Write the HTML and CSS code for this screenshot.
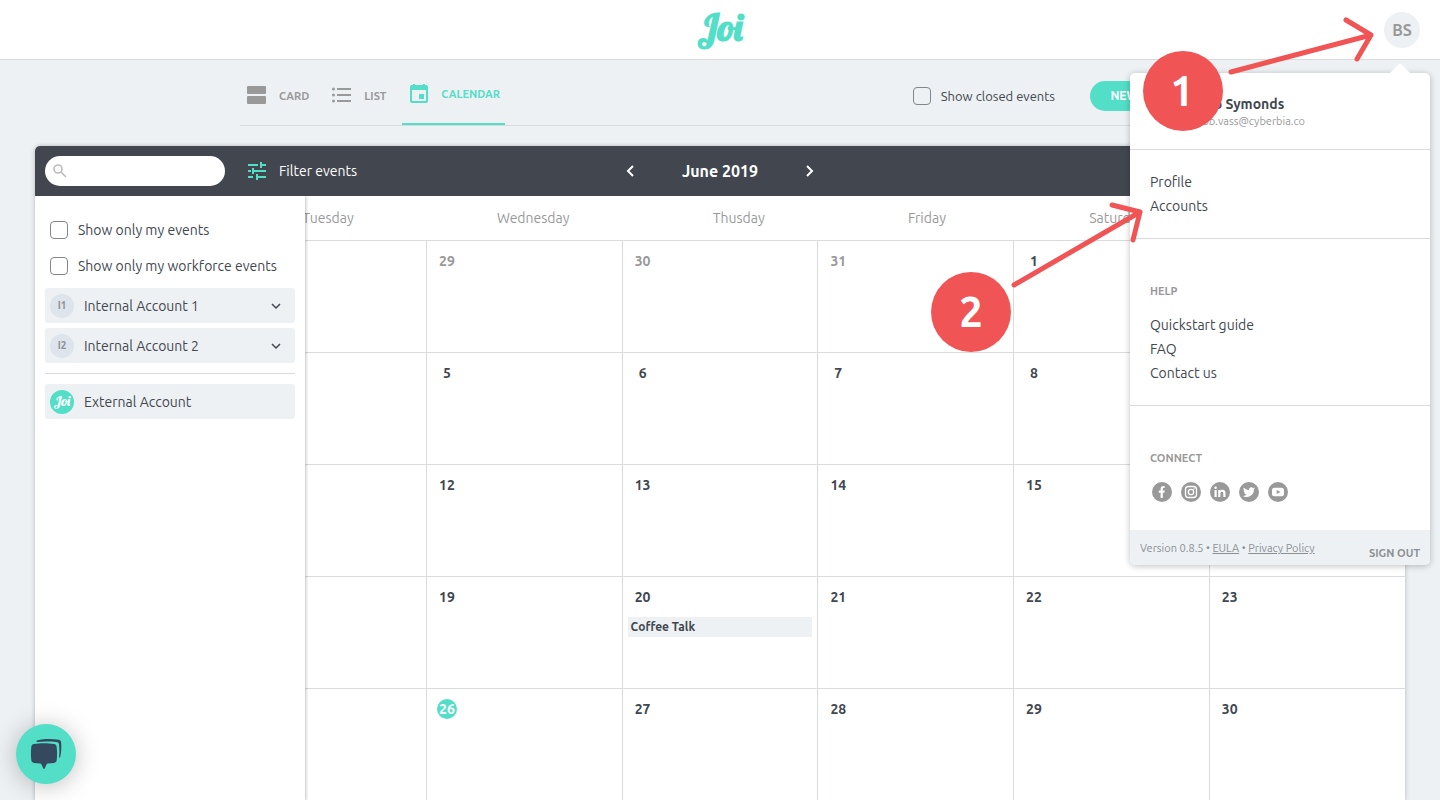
FILE: index.html
```html
<!DOCTYPE html>
<html lang="en">
<head>
    <meta charset="UTF-8">
    <meta name="viewport" content="width=device-width, initial-scale=1.0">
    <title>Joi - Calendar</title>
    <link rel="stylesheet" href="styles.css">
</head>
<body>
    <header class="topbar">
        <a href="#" class="logo">Joi</a>
        <button type="button" class="user-button">BS</button>
    </header>

    <div class="view-bar">
        <nav class="tabs">
            <a href="#" class="tab">
                <svg width="20" height="20" viewBox="0 0 20 20" fill="currentColor"><rect x="0" y="0" width="19" height="8" rx="1"/><rect x="0" y="10" width="19" height="8" rx="1"/></svg>
                CARD
            </a>
            <a href="#" class="tab">
                <svg width="20" height="20" viewBox="0 0 20 20" fill="currentColor"><circle cx="1.5" cy="3" r="1.5"/><circle cx="1.5" cy="9" r="1.5"/><circle cx="1.5" cy="15" r="1.5"/><rect x="5" y="2" width="14" height="2"/><rect x="5" y="8" width="14" height="2"/><rect x="5" y="14" width="14" height="2"/></svg>
                LIST
            </a>
            <a href="#" class="tab active">
                <svg width="20" height="20" viewBox="0 0 20 20" fill="currentColor"><path fill-rule="evenodd" d="M4 0h2v1h8V0h2v1h1a2 2 0 0 1 2 2v14a2 2 0 0 1-2 2H3a2 2 0 0 1-2-2V3a2 2 0 0 1 2-2h1zM3 6v11h14V6z"/><rect x="10" y="10" width="5" height="5"/></svg>
                CALENDAR
            </a>
        </nav>
        <div class="view-actions">
            <label class="check"><input type="checkbox"> Show closed events</label>
            <button type="button" class="new-button">NEW EVENT</button>
        </div>
    </div>

    <main class="calendar">
        <div class="toolbar">
            <div class="toolbar-left">
                <label class="search">
                    <svg width="14" height="14" viewBox="0 0 14 14" fill="none" stroke="#bbb" stroke-width="1.6"><circle cx="5" cy="5" r="4"/><path d="M8 8l5 5"/></svg>
                    <input type="text" aria-label="Search events">
                </label>
                <button type="button" class="filter-button">
                    <svg width="20" height="20" viewBox="0 0 20 20" fill="none" stroke="#52dec7" stroke-width="2"><path d="M1 4h10M14 4h5M14 1v6M1 10h3M7 10h12M6 7v6M1 16h5M9 16h10M10 13v6"/></svg>
                    Filter events
                </button>
            </div>
            <div class="month">
                <button type="button" aria-label="Previous month"><svg width="20" height="20" viewBox="0 0 20 20"><path d="M13 5l-5 5 5 5"/></svg></button>
                <h1>June 2019</h1>
                <button type="button" aria-label="Next month"><svg width="20" height="20" viewBox="0 0 20 20"><path d="M7 5l5 5-5 5"/></svg></button>
            </div>
        </div>

        <div class="calendar-body">
            <div class="weekdays">
                <span>Tuesday</span>
                <span>Wednesday</span>
                <span>Thusday</span>
                <span>Friday</span>
                <span>Saturday</span>
                <span>Sunday</span>
            </div>
            <table class="days">
                <tbody>
                    <tr>
                        <td></td>
                        <td></td>
                        <td class="other"><span class="date">29</span></td>
                        <td class="other"><span class="date">30</span></td>
                        <td class="other"><span class="date">31</span></td>
                        <td><span class="date">1</span></td>
                        <td></td>
                    </tr>
                    <tr>
                        <td></td>
                        <td></td>
                        <td><span class="date">5</span></td>
                        <td><span class="date">6</span></td>
                        <td><span class="date">7</span></td>
                        <td><span class="date">8</span></td>
                        <td></td>
                    </tr>
                    <tr>
                        <td></td>
                        <td></td>
                        <td><span class="date">12</span></td>
                        <td><span class="date">13</span></td>
                        <td><span class="date">14</span></td>
                        <td><span class="date">15</span></td>
                        <td></td>
                    </tr>
                    <tr>
                        <td></td>
                        <td></td>
                        <td><span class="date">19</span></td>
                        <td><span class="date">20</span><a href="#" class="event">Coffee Talk</a></td>
                        <td><span class="date">21</span></td>
                        <td><span class="date">22</span></td>
                        <td><span class="date">23</span></td>
                    </tr>
                    <tr>
                        <td></td>
                        <td></td>
                        <td><span class="date today">26</span></td>
                        <td><span class="date">27</span></td>
                        <td><span class="date">28</span></td>
                        <td><span class="date">29</span></td>
                        <td><span class="date">30</span></td>
                    </tr>
                </tbody>
            </table>

            <aside class="filters">
                <label class="check"><input type="checkbox"> Show only my events</label>
                <label class="check"><input type="checkbox"> Show only my workforce events</label>
                <div class="accounts">
                    <button type="button" class="account">
                        <span class="badge">I1</span>
                        Internal Account 1
                        <svg class="chevron" width="10" height="10" viewBox="0 0 10 10"><path d="M1 3l4 4 4-4"/></svg>
                    </button>
                    <button type="button" class="account">
                        <span class="badge">I2</span>
                        Internal Account 2
                        <svg class="chevron" width="10" height="10" viewBox="0 0 10 10"><path d="M1 3l4 4 4-4"/></svg>
                    </button>
                </div>
                <div class="accounts external">
                    <button type="button" class="account">
                        <span class="badge brand">Joi</span>
                        External Account
                    </button>
                </div>
            </aside>
        </div>
    </main>

    <div class="user-menu">
        <div class="user-info">
            <div class="user-name">Bob Symonds</div>
            <div class="user-email">bob.vass@cyberbia.co</div>
        </div>
        <div class="menu-section">
            <a href="#">Profile</a>
            <a href="#">Accounts</a>
        </div>
        <div class="menu-section titled">
            <h2>HELP</h2>
            <a href="#">Quickstart guide</a>
            <a href="#">FAQ</a>
            <a href="#">Contact us</a>
        </div>
        <div class="menu-section titled connect">
            <h2>CONNECT</h2>
            <div class="social">
                <a href="#" aria-label="Facebook"><svg width="24" height="24" viewBox="0 0 24 24"><circle cx="12" cy="12" r="10" fill="#999"/><path fill="#fff" d="M10.600 18v-5.300H8.800v-2.200h1.800V9c0-1.900 1.100-2.900 2.700-2.900.8 0 1.400.1 1.400.1V8h-.9c-.8 0-1 .5-1 1v1.500h1.900l-.3 2.200h-1.600V18z"/></svg></a>
                <a href="#" aria-label="Instagram"><svg width="24" height="24" viewBox="0 0 24 24" fill="none" stroke="#fff" stroke-width="1.3"><circle cx="12" cy="12" r="10" fill="#999" stroke="none"/><rect x="6.5" y="6.5" width="11" height="11" rx="3"/><circle cx="12" cy="12" r="2.7"/><circle cx="15.1" cy="8.9" r=".7" fill="#fff" stroke="none"/></svg></a>
                <a href="#" aria-label="LinkedIn"><svg width="24" height="24" viewBox="0 0 24 24"><circle cx="12" cy="12" r="10" fill="#999"/><circle cx="7.6" cy="7.8" r="1.3" fill="#fff"/><path fill="#fff" d="M6.5 10h2.2v7H6.500zM10.200 10h2.100v1c.4-.7 1.200-1.200 2.300-1.200 2.200 0 2.900 1.300 2.900 3.400V17h-2.200v-3.500c0-1-.2-1.800-1.300-1.800s-1.600.8-1.600 1.800V17h-2.200z"/></svg></a>
                <a href="#" aria-label="Twitter"><svg width="24" height="24" viewBox="0 0 24 24"><circle cx="12" cy="12" r="10" fill="#999"/><path fill="#fff" d="M18 8.300c-.4.200-.9.300-1.400.4.500-.3.900-.8 1.100-1.400-.5.300-1 .5-1.600.6a2.500 2.500 0 0 0-4.200 2.300c-2-.1-3.900-1.100-5.100-2.600-.7 1.100-.3 2.600.8 3.300-.4 0-.8-.1-1.100-.3 0 1.200.8 2.200 2 2.500-.4.100-.7.100-1.100 0 .3 1 1.200 1.700 2.300 1.700A5 5 0 0 1 6 15.900a7 7 0 0 0 10.800-6.300c.5-.4.900-.8 1.200-1.300z"/></svg></a>
                <a href="#" aria-label="YouTube"><svg width="24" height="24" viewBox="0 0 24 24"><circle cx="12" cy="12" r="10" fill="#999"/><rect x="6" y="7.700" width="12" height="8.600" rx="2.500" fill="#fff"/><path fill="#999" d="M10.700 9.900v4.200l3.700-2.100z"/></svg></a>
            </div>
        </div>
        <div class="menu-footer">
            <span>Version 0.8.5 • <a href="#">EULA</a> • <a href="#">Privacy Policy</a></span>
            <button type="button">SIGN OUT</button>
        </div>
    </div>

    <button type="button" class="chat-button" aria-label="Open chat">
        <svg width="32" height="32" viewBox="0 0 32 32" fill="#34495e"><path d="M7 2.500C14 .8 22 .8 28.500 1.800 30.500 2 31 3 31.200 5c.3 5 .1 9-1 14-.2.800-1 1-1.100 0 .4-4 .4-8 0-12.200-.2-2-1-2.600-3-2.800C20 3.300 13 3.400 7.200 4c-1 0-1-1.300-.2-1.500z"/><path d="M4 6c6-1 14-1 20 0 1.700.3 2.500 1.200 2.700 3 .5 4.500.5 9 0 13-.2 1.800-1 2.600-2.700 2.900l-6 .6c-1.300.2-1.800 1.300-2.300 2.700-.5 1.500-1.300 2.700-1.700 2.700s-1.200-1.200-1.700-2.700c-.5-1.400-1-2.500-2.300-2.700l-6-.6C2.300 24.600 1.500 23.800 1.300 22c-.5-4-.5-8.500 0-13C1.500 7.200 2.300 6.300 4 6z"/></svg>
    </button>

    <!-- Numbered steps -->
    <svg class="steps" width="520" height="360" viewBox="0 0 520 360">
        <g class="arrow">
            <path d="M311 72L451 35M426 20L451 35L437 59"/>
            <path d="M94 285L220 212M192 205L220 212L213 240"/>
        </g>
        <circle cx="263" cy="91" r="40"/>
        <text x="262" y="106">1</text>
        <circle cx="51" cy="312" r="40"/>
        <text x="51" y="327">2</text>
    </svg>
</body>
</html>
```
FILE: styles.css
```css
* {
    box-sizing: border-box;
}
body {
    margin: 0;
    height: 100vh;
    overflow: hidden;
    position: relative;
    background-color: #edf1f4;
    color: #42474f;
    font-family: Ubuntu, "Noto Sans", sans-serif;
    font-size: 14px;
    line-height: 24px;
}
a {
    color: inherit;
    text-decoration: none;
}
button {
    padding: 0;
    border: none;
    background: none;
    color: inherit;
    font: inherit;
    cursor: pointer;
}
svg {
    display: block;
    flex-shrink: 0;
}

/* Top bar */
.topbar {
    display: grid;
    grid-template-columns: 1fr auto 1fr;
    align-items: center;
    height: 60px;
    padding: 0 20px;
    background-color: #fff;
    border-bottom: 1px solid #d8dadb;
}
.logo {
    grid-column: 2;
    padding-bottom: 6px;
    color: #52dec7;
    font-family: Lobster, "Liberation Serif", serif;
    font-size: 38px;
    font-weight: bold;
    line-height: 48px;
}
.user-button {
    justify-self: end;
    width: 36px;
    height: 36px;
    border-radius: 50%;
    background-color: #edf1f4;
    color: #999;
    font-size: 16px;
    font-weight: bold;
}

/* View switcher */
.view-bar {
    display: flex;
    justify-content: space-between;
    max-width: 960px;
    height: 66px;
    margin: 0 auto 20px;
    border-bottom: 1px solid #d8dadb;
}
.tabs {
    display: flex;
    gap: 11px;
}
.tab {
    display: flex;
    align-items: center;
    gap: 12px;
    padding: 6px 5px 0 7px;
    color: #999;
    font-size: 11px;
    font-weight: bold;
}
.tab.active {
    padding-top: 4px;
    border-bottom: 2px solid #52dec7;
    color: #52dec7;
}
.view-actions {
    display: flex;
    align-items: center;
    gap: 35px;
    padding-top: 7px;
    font-size: 13px;
}
.check {
    display: flex;
    align-items: center;
    gap: 10px;
}
.check input {
    appearance: none;
    width: 18px;
    height: 18px;
    margin: 0;
    border: 1px solid #83878c;
    border-radius: 4px;
}
.new-button {
    width: 110px;
    height: 30px;
    border-radius: 15px;
    background-color: #52dec7;
    color: #fff;
    font-size: 12px;
    font-weight: bold;
}

/* Calendar */
.calendar {
    margin: 0 35px;
    border-radius: 5px 5px 0 0;
    background-color: #fff;
    box-shadow: 0 0 4px rgba(0, 0, 0, 0.25);
}
.toolbar {
    display: grid;
    grid-template-columns: 1fr 200px 1fr;
    align-items: center;
    height: 50px;
    padding: 0 10px;
    border-radius: 5px 5px 0 0;
    background-color: #42474f;
    color: #fff;
}
.toolbar-left {
    display: flex;
    align-items: center;
    gap: 22px;
}
.search {
    display: flex;
    align-items: center;
    gap: 6px;
    width: 180px;
    height: 30px;
    padding: 0 8px;
    border-radius: 15px;
    background-color: #fff;
}
.search input {
    flex: 1;
    min-width: 0;
    border: none;
    outline: none;
    background: none;
    font: inherit;
}
.filter-button {
    display: flex;
    align-items: center;
    gap: 12px;
}
.month {
    display: flex;
    align-items: center;
    justify-content: space-between;
}
.month h1 {
    margin: 0;
    font-size: 16px;
}
.month path {
    fill: none;
    stroke: #fff;
    stroke-width: 2;
}
.calendar-body {
    position: relative;
}
.weekdays {
    display: flex;
    align-items: center;
    justify-content: space-around;
    height: 44px;
    padding-left: calc(100% / 7);
    color: #999;
}
.days {
    width: 100%;
    table-layout: fixed;
    border-collapse: collapse;
}
.days td {
    height: 112px;
    padding: 8px 5px;
    border: 1px solid #d8dadb;
    vertical-align: top;
}
.days td:first-child {
    border-left: none;
}
.days td:last-child {
    border-right: none;
}
.date {
    display: block;
    width: 20px;
    height: 20px;
    margin: 2px 5px;
    border-radius: 50%;
    font-weight: bold;
    line-height: 20px;
    text-align: center;
}
.other .date {
    color: #999;
}
.date.today {
    background-color: #52dec7;
    color: #fff;
}
.event {
    display: block;
    height: 20px;
    margin-top: 10px;
    padding: 0 3px;
    background-color: #edf1f4;
    font-size: 12px;
    font-weight: bold;
    line-height: 20px;
}

/* Filter panel over the grid */
.filters {
    position: absolute;
    top: 0;
    bottom: 0;
    left: 0;
    width: 270px;
    padding: 16px 10px;
    background-color: #fff;
    box-shadow: 1px 0 3px rgba(0, 0, 0, 0.25);
    clip-path: inset(0 -5px 0 0);
}
.filters .check {
    height: 36px;
    padding: 0 5px;
}
.accounts {
    display: flex;
    flex-direction: column;
    gap: 5px;
    padding-top: 4px;
}
.accounts.external {
    margin-top: 10px;
    padding-top: 10px;
    border-top: 1px solid #d8dadb;
}
.account {
    display: flex;
    align-items: center;
    gap: 10px;
    height: 35px;
    padding: 0 14px 0 5px;
    border-radius: 3px;
    background-color: #edf1f4;
}
.badge {
    width: 24px;
    height: 24px;
    border-radius: 50%;
    background-color: #dde4ec;
    color: #8c9095;
    font-size: 10px;
    font-weight: bold;
}
.badge.brand {
    background-color: #52dec7;
    color: #fff;
    font-family: Lobster, "Liberation Serif", serif;
    font-size: 14px;
    font-weight: normal;
    line-height: 22px;
}
.chevron {
    margin-left: auto;
    fill: none;
    stroke: #42474f;
    stroke-width: 1.5;
}

/* User menu */
.user-menu {
    position: absolute;
    top: 73px;
    right: 10px;
    width: 300px;
    border-radius: 5px;
    background-color: #fff;
    box-shadow: 0 1px 6px rgba(0, 0, 0, 0.25);
}
.user-menu::before {
    content: "";
    position: absolute;
    top: -10px;
    right: 20px;
    border: 10px solid transparent;
    border-top: none;
    border-bottom-color: #fff;
}
.user-info {
    height: 77px;
    padding: 22px 20px 0 66px;
    border-bottom: 1px solid #d8dadb;
}
.user-name {
    font-weight: bold;
    line-height: 18px;
}
.user-email {
    color: #999;
    font-size: 11px;
    line-height: 16px;
}
.menu-section {
    padding: 20px;
    border-bottom: 1px solid #d8dadb;
}
.menu-section.titled {
    padding-top: 40px;
}
.menu-section.connect {
    padding-bottom: 26px;
    border-bottom: none;
}
.menu-section > a {
    display: block;
}
.menu-section h2 {
    margin: 0 0 10px;
    color: #999;
    font-size: 11px;
}
.social {
    display: flex;
    gap: 5px;
}
.menu-footer {
    display: flex;
    justify-content: space-between;
    height: 35px;
    padding: 6px 10px 0;
    border-radius: 0 0 5px 5px;
    background-color: #edf1f4;
    color: #8c9095;
    font-size: 11px;
}
.menu-footer a {
    text-decoration: underline;
}
.menu-footer button {
    align-self: flex-end;
    font-weight: bold;
}

/* Chat launcher */
.chat-button {
    position: fixed;
    bottom: 16px;
    left: 16px;
    display: flex;
    align-items: center;
    justify-content: center;
    width: 60px;
    height: 60px;
    border-radius: 50%;
    background-color: #52dec7;
    box-shadow: 0 2px 24px rgba(0, 0, 0, 0.25);
}

/* Numbered steps */
.steps {
    position: absolute;
    top: 0;
    right: 0;
    fill: #f05455;
    pointer-events: none;
}
.arrow {
    fill: none;
    stroke: #f05455;
    stroke-width: 5;
    stroke-linecap: round;
    stroke-linejoin: round;
}
.steps text {
    fill: #fff;
    font-size: 42px;
    font-weight: bold;
    text-anchor: middle;
}
```
